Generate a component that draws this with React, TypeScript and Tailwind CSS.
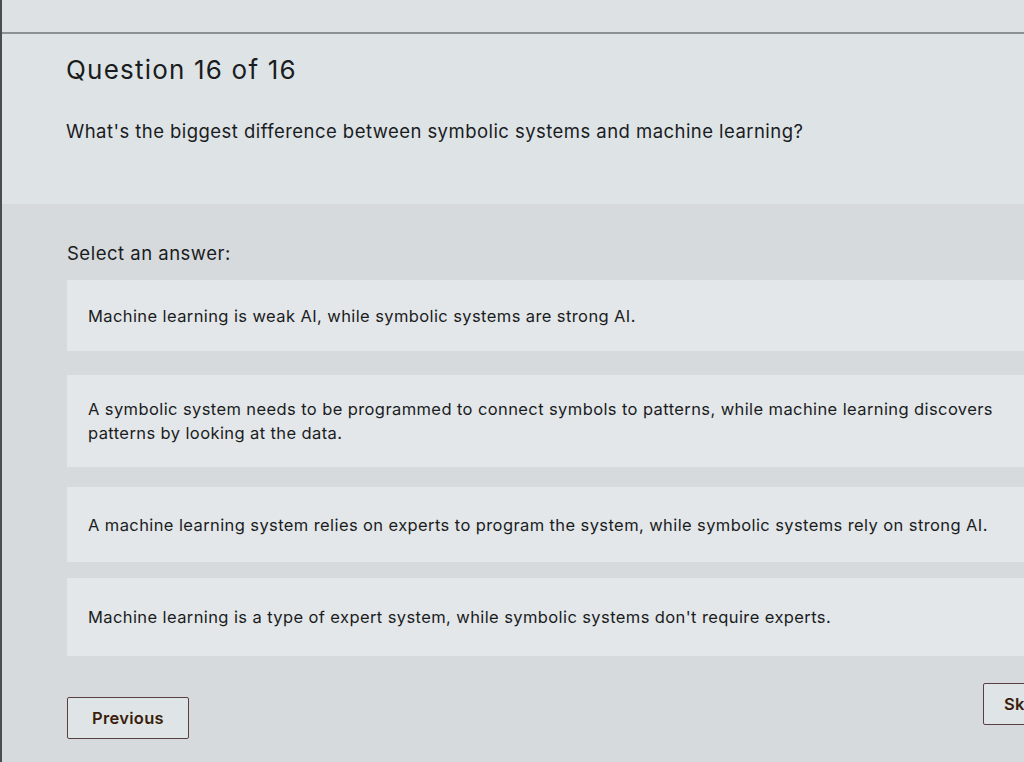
const ANSWERS = [
  {
    text: 'Machine learning is weak AI, while symbolic systems are strong AI.',
    box: 'h-[71px]',
  },
  {
    text: 'A symbolic system needs to be programmed to connect symbols to patterns, while machine learning discovers patterns by looking at the data.',
    box: 'mt-[24px] h-[92px]',
  },
  {
    text: 'A machine learning system relies on experts to program the system, while symbolic systems rely on strong AI.',
    box: 'mt-[20px] h-[75px]',
  },
  {
    text: "Machine learning is a type of expert system, while symbolic systems don't require experts.",
    box: 'mt-[16px] h-[78px]',
  },
];

export default function App() {
  return (
    <div
      className="h-[762px] w-[1024px] overflow-hidden border-l-2 border-[#4a4d50] bg-[#d6dadc] text-[#1a1c1e]"
      style={{ fontFamily: 'Inter, "Liberation Sans", sans-serif' }}
    >
      <div className="w-[1120px]">
        <div className="h-[34px] border-b-2 border-[#8d9195] bg-[#dde1e4]" />

        <section className="h-[170px] bg-[#dee3e6] pl-[64px] pt-[20px]">
          <h1 className="text-[26px] leading-[32px] font-normal tracking-[1.2px]">Question 16 of 16</h1>
          <p className="mt-[33px] text-[18.5px] leading-[24px] tracking-[0.45px]">
            What's the biggest difference between symbolic systems and machine learning?
          </p>
        </section>

        <section className="pl-[65px] pr-[40px] pt-[38px]">
          <p className="text-[18.5px] leading-[22px] tracking-[0.5px]">Select an answer:</p>

          <div className="mt-[16px] flex flex-col">
            {ANSWERS.map((a) => (
              <button
                key={a.text}
                className={`flex w-full items-center bg-[#e3e7e9] pl-[21px] text-left ${a.box}`}
              >
                <span className="max-w-[950px] text-[16.5px] leading-[24px] tracking-[0.4px] text-[#1a1c1e]">
                  {a.text}
                </span>
              </button>
            ))}
          </div>

          <div className="mt-[27px] flex items-start justify-between">
            <button className="mt-[14px] h-[42px] w-[122px] rounded-[2px] border-[1.5px] border-[#5a3f40] bg-[#dfe4e6] text-[16.5px] font-semibold tracking-[0.3px] text-[#3a1d0c]">
              Previous
            </button>
            <button className="mr-[19px] h-[42px] w-[80px] rounded-[2px] border-[1.5px] border-[#5a3f40] bg-[#dfe4e6] pl-[20px] text-left text-[16.5px] font-semibold tracking-[0.3px] text-[#3a1d0c]">
              Skip
            </button>
          </div>
        </section>
      </div>
    </div>
  );
}
